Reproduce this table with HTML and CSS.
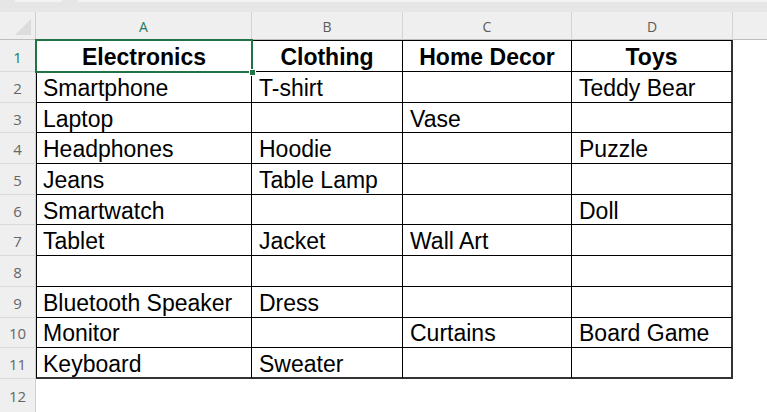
FILE: index.html
```html
<!DOCTYPE html>
<html>
<head>
<meta charset="utf-8">
<link rel="stylesheet" href="styles.css">
</head>
<body>
<div class="sheet">
  <div class="topbar"><div class="topline a"></div><div class="topline b"></div></div>
  <div class="grid">
    <div class="corner"><div class="tri"></div></div>
    <div class="colhead sel">A</div>
    <div class="colhead">B</div>
    <div class="colhead">C</div>
    <div class="colhead">D</div>
    <div class="colhead last"></div>

    <div class="rowhead sel">1</div>
    <div class="cell t h first r1 a1">Electronics<div class="selection"><div class="handle"></div></div></div>
    <div class="cell t h r1">Clothing</div>
    <div class="cell t h r1">Home Decor</div>
    <div class="cell t h d r1">Toys</div>
    <div class="cell e"></div>

    <div class="rowhead">2</div>
    <div class="cell t first">Smartphone</div>
    <div class="cell t">T-shirt</div>
    <div class="cell t"></div>
    <div class="cell t d">Teddy Bear</div>
    <div class="cell e"></div>

    <div class="rowhead">3</div>
    <div class="cell t first">Laptop</div>
    <div class="cell t"></div>
    <div class="cell t">Vase</div>
    <div class="cell t d"></div>
    <div class="cell e"></div>

    <div class="rowhead">4</div>
    <div class="cell t first">Headphones</div>
    <div class="cell t">Hoodie</div>
    <div class="cell t"></div>
    <div class="cell t d">Puzzle</div>
    <div class="cell e"></div>

    <div class="rowhead">5</div>
    <div class="cell t first">Jeans</div>
    <div class="cell t">Table Lamp</div>
    <div class="cell t"></div>
    <div class="cell t d"></div>
    <div class="cell e"></div>

    <div class="rowhead">6</div>
    <div class="cell t first">Smartwatch</div>
    <div class="cell t"></div>
    <div class="cell t"></div>
    <div class="cell t d">Doll</div>
    <div class="cell e"></div>

    <div class="rowhead">7</div>
    <div class="cell t first">Tablet</div>
    <div class="cell t">Jacket</div>
    <div class="cell t">Wall Art</div>
    <div class="cell t d"></div>
    <div class="cell e"></div>

    <div class="rowhead">8</div>
    <div class="cell t first"></div>
    <div class="cell t"></div>
    <div class="cell t"></div>
    <div class="cell t d"></div>
    <div class="cell e"></div>

    <div class="rowhead">9</div>
    <div class="cell t first">Bluetooth Speaker</div>
    <div class="cell t">Dress</div>
    <div class="cell t"></div>
    <div class="cell t d"></div>
    <div class="cell e"></div>

    <div class="rowhead">10</div>
    <div class="cell t first">Monitor</div>
    <div class="cell t"></div>
    <div class="cell t">Curtains</div>
    <div class="cell t d">Board Game</div>
    <div class="cell e"></div>

    <div class="rowhead">11</div>
    <div class="cell t first b">Keyboard</div>
    <div class="cell t b">Sweater</div>
    <div class="cell t b"></div>
    <div class="cell t d b"></div>
    <div class="cell e"></div>

    <div class="rowhead last">12</div>
    <div class="cell blank"></div>
    <div class="cell blank"></div>
    <div class="cell blank"></div>
    <div class="cell blank"></div>
    <div class="cell blank"></div>
  </div>
</div>
</body>
</html>
```

FILE: styles.css
```css
* { box-sizing: border-box; }
html, body { margin: 0; padding: 0; background: #ffffff; }
body { width: 767px; height: 412px; overflow: hidden; font-family: "Liberation Sans", Arial, sans-serif; }

.sheet { display: flex; flex-direction: column; width: 767px; height: 412px; }

.topbar { height: 12px; background: #e6e6e6; position: relative; flex: none; }
.topline { position: absolute; top: 0; height: 2px; background: #f3f3f3; }
.topline.a { left: 15px; width: 47px; }
.topline.b { left: 78px; right: 0; }

.grid {
  display: grid;
  grid-template-columns: 36px 216px 151px 169px 161px 1fr;
  grid-template-rows: 28px 32px repeat(10, 30.7px) 1fr;
  flex: 1;
}

.corner {
  background: #efefef;
  border-right: 1px solid #cfcfcf;
  border-bottom: 1px solid #bdbdbd;
  position: relative;
}
.tri {
  position: absolute; right: 4px; bottom: 4px;
  width: 0; height: 0;
  border-left: 16px solid transparent;
  border-bottom: 16px solid #dcdcdc;
}

.colhead {
  background: #efefef;
  border-right: 1px solid #d4d4d4;
  border-bottom: 1px solid #bdbdbd;
  display: flex; align-items: center; justify-content: center;
  font-family: "Open Sans", "Noto Sans", sans-serif;
  font-size: 14px; color: #5c5c5c;
  padding-top: 2px;
}
.colhead.sel { color: #1f7a5c; }
.colhead.last { border-right: none; }

.rowhead {
  background: #efefef;
  border-right: 1px solid #cfcfcf;
  border-bottom: 1px solid #dadada;
  display: flex; align-items: center; justify-content: center;
  font-family: "Open Sans", "Noto Sans", sans-serif;
  font-size: 15px; color: #666666;
  padding-top: 2px;
}
.rowhead.sel { color: #1f7a5c; }
.rowhead.last { border-bottom: none; }

.cell {
  font-size: 23px; color: #000;
  display: flex; align-items: center;
  padding: 3px 0 0 7px;
  white-space: nowrap;
  border-right: 1px solid #000;
  border-bottom: 1px solid #000;
}
.cell.first { border-left: 1px solid #000; padding-left: 6px; }
.cell.r1 { border-top: 1px solid #000; }
.cell.h { font-weight: bold; justify-content: center; padding-left: 0; }
.cell.d { border-right: 2px solid #333; }
.cell.b { border-bottom: 2px solid #333; }
.cell.e { border: none; }
.cell.blank { border: none; }

.a1 { position: relative; }
.selection {
  position: absolute; left: -2px; top: -2px; right: -2px; bottom: -2px;
  border: 2px solid #217346;
  pointer-events: none;
}
.handle {
  position: absolute; right: -5px; bottom: -5px;
  width: 7px; height: 7px;
  background: #217346;
  border: 1px solid #fff;
}
```
